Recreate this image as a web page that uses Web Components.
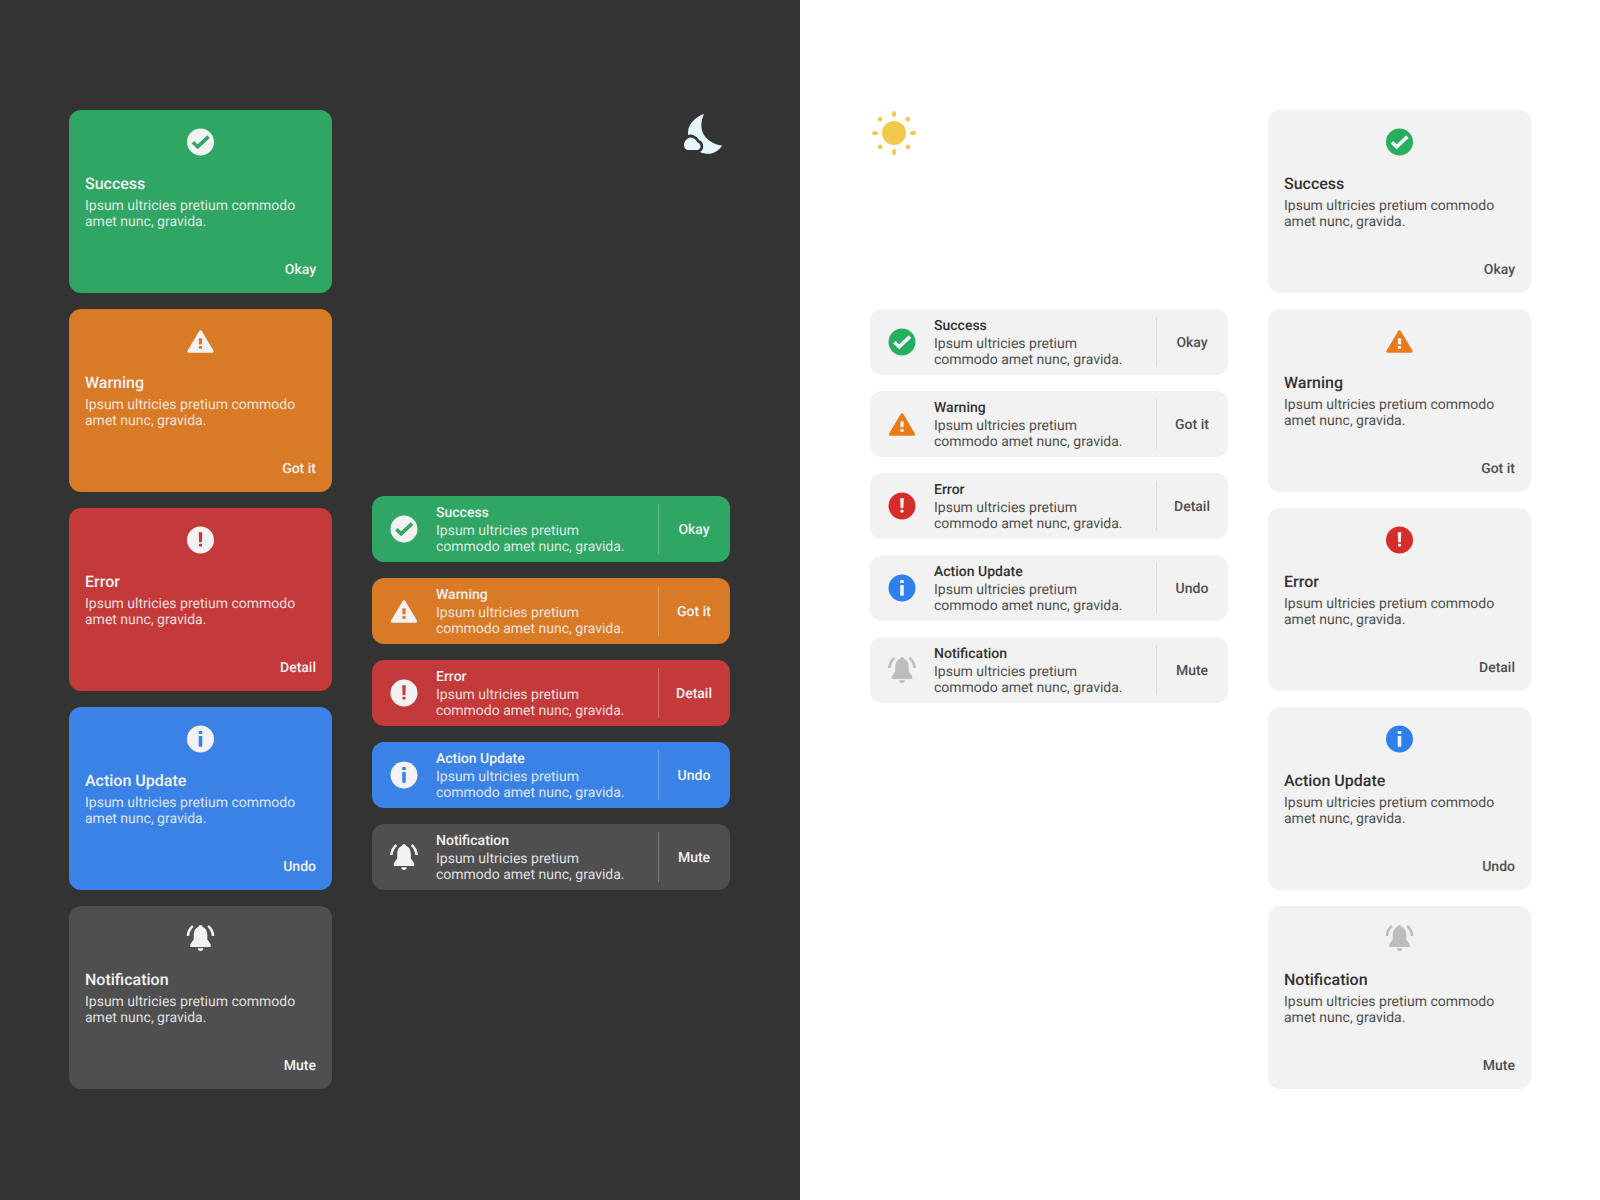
<!doctype html>
<html><head><meta charset="utf-8">
<style>
html,body{margin:0;padding:0;background:#fff}
body{font-family:Roboto,"Liberation Sans",sans-serif;width:1600px;height:1200px;overflow:hidden;text-rendering:geometricPrecision}
</style></head>
<body>
<theme-board>
  <theme-panel mode="dark" slot="dark">
    <div slot="cards">
      <alert-card tone="success" mode="dark" heading="Success" action="Okay">Ipsum ultricies pretium commodo amet nunc, gravida.</alert-card>
      <alert-card tone="warning" mode="dark" heading="Warning" action="Got it">Ipsum ultricies pretium commodo amet nunc, gravida.</alert-card>
      <alert-card tone="error" mode="dark" heading="Error" action="Detail">Ipsum ultricies pretium commodo amet nunc, gravida.</alert-card>
      <alert-card tone="info" mode="dark" heading="Action Update" action="Undo">Ipsum ultricies pretium commodo amet nunc, gravida.</alert-card>
      <alert-card tone="notice" mode="dark" heading="Notification" action="Mute">Ipsum ultricies pretium commodo amet nunc, gravida.</alert-card>
    </div>
    <moon-icon slot="glyph"></moon-icon>
    <div slot="banners">
      <alert-banner tone="success" mode="dark" heading="Success" action="Okay">Ipsum ultricies pretium commodo amet nunc, gravida.</alert-banner>
      <alert-banner tone="warning" mode="dark" heading="Warning" action="Got it">Ipsum ultricies pretium commodo amet nunc, gravida.</alert-banner>
      <alert-banner tone="error" mode="dark" heading="Error" action="Detail">Ipsum ultricies pretium commodo amet nunc, gravida.</alert-banner>
      <alert-banner tone="info" mode="dark" heading="Action Update" action="Undo">Ipsum ultricies pretium commodo amet nunc, gravida.</alert-banner>
      <alert-banner tone="notice" mode="dark" heading="Notification" action="Mute">Ipsum ultricies pretium commodo amet nunc, gravida.</alert-banner>
    </div>
  </theme-panel>
  <theme-panel mode="light" slot="light">
    <sun-icon slot="glyph"></sun-icon>
    <div slot="banners">
      <alert-banner tone="success" mode="light" heading="Success" action="Okay">Ipsum ultricies pretium commodo amet nunc, gravida.</alert-banner>
      <alert-banner tone="warning" mode="light" heading="Warning" action="Got it">Ipsum ultricies pretium commodo amet nunc, gravida.</alert-banner>
      <alert-banner tone="error" mode="light" heading="Error" action="Detail">Ipsum ultricies pretium commodo amet nunc, gravida.</alert-banner>
      <alert-banner tone="info" mode="light" heading="Action Update" action="Undo">Ipsum ultricies pretium commodo amet nunc, gravida.</alert-banner>
      <alert-banner tone="notice" mode="light" heading="Notification" action="Mute">Ipsum ultricies pretium commodo amet nunc, gravida.</alert-banner>
    </div>
    <div slot="cards">
      <alert-card tone="success" mode="light" heading="Success" action="Okay">Ipsum ultricies pretium commodo amet nunc, gravida.</alert-card>
      <alert-card tone="warning" mode="light" heading="Warning" action="Got it">Ipsum ultricies pretium commodo amet nunc, gravida.</alert-card>
      <alert-card tone="error" mode="light" heading="Error" action="Detail">Ipsum ultricies pretium commodo amet nunc, gravida.</alert-card>
      <alert-card tone="info" mode="light" heading="Action Update" action="Undo">Ipsum ultricies pretium commodo amet nunc, gravida.</alert-card>
      <alert-card tone="notice" mode="light" heading="Notification" action="Mute">Ipsum ultricies pretium commodo amet nunc, gravida.</alert-card>
    </div>
  </theme-panel>
</theme-board>
<script>
const FILL={success:'#30A665',warning:'#D97A27',error:'#C43939',info:'#3B82E6',notice:'#4F4F4F'};
const INK={success:'#27AE60',warning:'#E87B1A',error:'#D62C2C',info:'#2F80ED',notice:'#BDBDBD'};
function paletteFor(el){
  const tone=el.getAttribute('tone'),dark=el.getAttribute('mode')==='dark';
  return dark
    ?{bg:FILL[tone],title:'#F2F2F2',body:'rgba(242,242,242,.9)',act:'#F2F2F2',line:'rgba(255,255,255,.25)',mark:'#F2F2F2',cut:FILL[tone]}
    :{bg:'#F2F2F2',title:'#333333',body:'#4F4F4F',act:'#4F4F4F',line:'#DDDDDD',mark:INK[tone],cut:'#F2F2F2'};
}
class StatusIcon extends HTMLElement{
  connectedCallback(){
    const s=this.shadowRoot||this.attachShadow({mode:'open'});
    const m=this.getAttribute('mark'),c=this.getAttribute('cut'),t=this.getAttribute('tone');
    const dx=this.getAttribute('dx')||'0';
    const shapes={
      success:`<circle cx="16" cy="16" r="13.5" fill="${m}"/><path d="M8.400 16.200L13.200 20.800L24 10.600" fill="none" stroke="${c}" stroke-width="3.600"/>`,
      warning:`<path d="M16 6.800L27.600 26.200H4.400Z" fill="${m}" stroke="${m}" stroke-width="3" stroke-linejoin="round"/><rect x="14.400" y="13.300" width="3.200" height="6" fill="${c}"/><rect x="14.400" y="21" width="3.200" height="2.800" fill="${c}"/>`,
      error:`<circle cx="16" cy="16" r="13.500" fill="${m}"/><path d="M14.200 8.300h3.600L17.400 18.300h-2.800z" fill="${c}"/><rect x="14.400" y="19.700" width="3.200" height="2.800" rx=".8" fill="${c}"/>`,
      info:`<circle cx="16" cy="16" r="13.500" fill="${m}"/><rect x="14.200" y="8" width="3.600" height="3" rx=".6" fill="${c}"/><rect x="14.200" y="13" width="3.600" height="10.700" rx=".6" fill="${c}"/>`,
      notice:`<path fill="${m}" d="M16 3C17 3 17.800 3.800 18 4.700C21.300 5.900 22.800 9 22.800 13V17.500L26.200 22.300V25H5.800V22.300L9.200 17.500V13C9.200 9 10.700 5.900 14 4.700C14.200 3.800 15 3 16 3ZM13.300 26.300H18.700A2.700 2.700 0 0 1 13.300 26.300Z"/><path d="M3.400 14C3.700 9.800 5.400 6.500 8.400 4M28.600 14C28.300 9.800 26.600 6.500 23.600 4" fill="none" stroke="${m}" stroke-width="2.500"/>`
    };
    s.innerHTML=`<style>:host{display:block;width:32px;height:32px}svg{display:block;overflow:visible}</style><svg width="32" height="32" viewBox="${dx} 0 32 32">${shapes[t]}</svg>`;
  }
}
customElements.define('status-icon',StatusIcon);
class AlertCard extends HTMLElement{
  constructor(){super();this.attachShadow({mode:'open'})}
  connectedCallback(){
    const p=paletteFor(this);
    this.shadowRoot.innerHTML=`<style>
      :host{display:flex;flex-direction:column;box-sizing:border-box;width:263px;height:183px;padding:16px 16px 15px;border-radius:12px;background:${p.bg};font-family:Roboto,"Liberation Sans",sans-serif}
      status-icon{align-self:center;margin-bottom:16px}
      h3{margin:0 0 5px;font:500 16px/19px Roboto,"Liberation Sans",sans-serif;color:${p.title}}
      p{margin:0;font:400 14px/16px Roboto,"Liberation Sans",sans-serif;color:${p.body}}
      span{margin-top:auto;align-self:flex-end;font:500 14px/16px Roboto,"Liberation Sans",sans-serif;color:${p.act}}
    </style>
    <status-icon dx="0.5" tone="${this.getAttribute('tone')}" mark="${p.mark}" cut="${p.cut}"></status-icon>
    <h3>${this.getAttribute('heading')}</h3><p><slot></slot></p><span>${this.getAttribute('action')}</span>`;
  }
}
customElements.define('alert-card',AlertCard);
class AlertBanner extends HTMLElement{
  constructor(){super();this.attachShadow({mode:'open'})}
  connectedCallback(){
    const p=paletteFor(this);
    this.shadowRoot.innerHTML=`<style>
      :host{display:flex;align-items:center;box-sizing:border-box;width:358px;height:66px;padding-left:16px;border-radius:12px;background:${p.bg};font-family:Roboto,"Liberation Sans",sans-serif}
      status-icon{flex:none;margin-right:16px}
      .text{flex:1;min-width:0;padding:2px 14px 0 0}
      h3{margin:0 0 2px;font:500 14px/16px Roboto,"Liberation Sans",sans-serif;color:${p.title}}
      p{margin:0;font:400 14px/16px Roboto,"Liberation Sans",sans-serif;color:${p.body}}
      .act{flex:none;box-sizing:border-box;width:72px;height:50px;padding:2px 1px 0 0;border-left:1px solid ${p.line};display:flex;align-items:center;justify-content:center;font:500 14px/16px Roboto,"Liberation Sans",sans-serif;color:${p.act}}
    </style>
    <status-icon tone="${this.getAttribute('tone')}" mark="${p.mark}" cut="${p.cut}"></status-icon>
    <div class="text"><h3>${this.getAttribute('heading')}</h3><p><slot></slot></p></div><div class="act">${this.getAttribute('action')}</div>`;
  }
}
customElements.define('alert-banner',AlertBanner);
class MoonIcon extends HTMLElement{
  constructor(){super();this.attachShadow({mode:'open'}).innerHTML=`<style>:host{display:block;width:40px;height:40px}svg{display:block}</style>
  <svg width="40" height="40" viewBox="0 0 40 40"><path fill="#E6F7FC" d="M20 0C11 3 4.500 10 4 18C3.800 27 12 39 22 39.700C29 40.500 34.500 37 38.200 31.500C31 31 24 27 20 21C16 14 17 7 20 0Z"/>
  <path fill="#E6F7FC" stroke="#333333" stroke-width="5.500" paint-order="stroke" d="M5 36C2 36 0 34 0 31C0 28 1.500 26.500 3 25C4.500 23.500 7 23 9 24C11.500 25 12.500 27 13.500 28.500C15.500 29 16.500 30.500 16.500 32.500C16.500 34.500 15 36 13 36Z"/></svg>`;}
}
customElements.define('moon-icon',MoonIcon);
class SunIcon extends HTMLElement{
  constructor(){super();
    let rays='';
    for(let i=0;i<8;i++){rays+=`<ellipse cx="22" cy="${i%2?2.400:3}" rx="${i%2?2.300:2}" ry="${i%2?2.300:3}" transform="rotate(${i*45} 22 22)"/>`;}
    this.attachShadow({mode:'open'}).innerHTML=`<style>:host{display:block;width:44px;height:44px}svg{display:block}</style>
  <svg width="44" height="44" viewBox="0 0 44 44" fill="#F2C94C"><circle cx="22" cy="22" r="12"/>${rays}</svg>`;}
}
customElements.define('sun-icon',SunIcon);
class ThemePanel extends HTMLElement{
  constructor(){super();this.attachShadow({mode:'open'})}
  connectedCallback(){
    const dark=this.getAttribute('mode')==='dark';
    this.shadowRoot.innerHTML=dark?`<style>
      :host{display:flex;box-sizing:border-box;width:800px;height:1200px;padding:110px 0 0 69px;gap:40px;background:#333333}
      ::slotted([slot=cards]),::slotted([slot=banners]){display:flex;flex-direction:column;gap:16px}
      .col{display:flex;flex-direction:column;width:358px}
      .glyph{display:flex;justify-content:flex-end;height:386px;padding:4px 6px 0 0;box-sizing:border-box}
    </style><slot name="cards"></slot><div class="col"><div class="glyph"><slot name="glyph"></slot></div><slot name="banners"></slot></div>`
    :`<style>
      :host{display:flex;box-sizing:border-box;width:800px;height:1200px;padding:110px 0 0 70px;gap:40px;background:#fff}
      ::slotted([slot=cards]),::slotted([slot=banners]){display:flex;flex-direction:column;gap:16px}
      .col{display:flex;flex-direction:column;width:358px}
      .glyph{display:flex;height:199px;padding:1px 0 0 2px;box-sizing:border-box}
    </style><div class="col"><div class="glyph"><slot name="glyph"></slot></div><slot name="banners"></slot></div><slot name="cards"></slot>`;
  }
}
customElements.define('theme-panel',ThemePanel);
class ThemeBoard extends HTMLElement{
  constructor(){super();this.attachShadow({mode:'open'}).innerHTML=`<style>:host{display:flex;width:1600px;height:1200px}</style><slot name="dark"></slot><slot name="light"></slot>`;}
}
customElements.define('theme-board',ThemeBoard);
</script>
</body></html>
